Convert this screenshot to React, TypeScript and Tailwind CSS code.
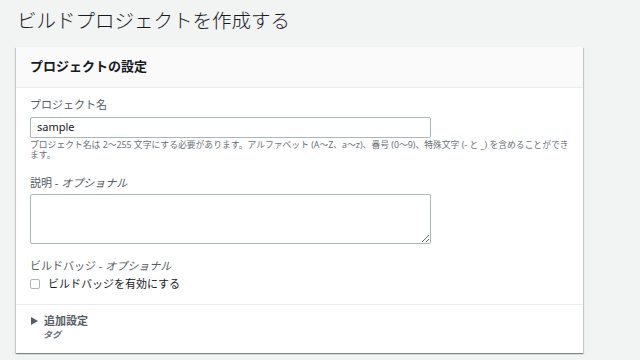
export default function App() {
  return (
    <div
      className="w-[640px] h-[360px] overflow-hidden bg-[#f2f3f3] text-[#16191f]"
      style={{ fontFamily: '"Noto Sans", "Noto Sans CJK JP", sans-serif' }}
    >
      <h1 className="pl-[17px] pt-[6px] h-[47px] text-[19.5px] leading-[30px] font-light text-[#16191f]">
        ビルドプロジェクトを作成する
      </h1>
      <div className="ml-4 w-[567px] bg-white shadow-[0_1px_1px_0_rgba(0,28,36,0.3),1px_1px_1px_0_rgba(0,28,36,0.15),-1px_1px_1px_0_rgba(0,28,36,0.15)]">
        <div className="h-[41px] px-[14px] flex items-center bg-[#fafafa] border-b border-[#eaeded]">
          <h2 className="text-[13px] font-bold text-[#16191f]">プロジェクトの設定</h2>
        </div>
        <div className="px-[14px] pt-[9px] pb-[12px]">
          <label className="block text-[11px] leading-[16px] text-[#545b64]">プロジェクト名</label>
          <div className="mt-[4px] w-[401px] h-[21px] border border-[#aab7b8] rounded-[2px] flex items-center px-[6px] text-[11px] text-[#16191f]">
            sample
          </div>
          <p className="mt-[2px] w-[540px] text-[8.8px] leading-[10px] text-[#687078]">
            プロジェクト名は 2〜255 文字にする必要があります。アルファベット (A〜Z、a〜z)、番号 (0〜9)、特殊文字 (- と _) を含めることができます。
          </p>
          <label className="block mt-[15px] text-[11px] leading-[16px] text-[#545b64]">
            説明 - <i>オプショナル</i>
          </label>
          <textarea
            className="block mt-[3px] w-[401px] h-[50px] border border-[#aab7b8] rounded-[2px] bg-white"
            readOnly
          />
          <label className="block mt-[14px] text-[11px] leading-[16px] text-[#545b64]">
            ビルドバッジ - <i>オプショナル</i>
          </label>
          <div className="mt-[2px] flex items-center gap-[8px]">
            <span className="w-[10px] h-[10px] border border-[#aab7b8] rounded-[2px] bg-white" />
            <span className="text-[11px] leading-[16px] text-[#16191f]">ビルドバッジを有効にする</span>
          </div>
        </div>
        <div className="border-t border-[#eaeded] px-[14px] pt-[8px] pb-[12px]">
          <div className="flex items-center gap-[6px]">
            <svg width="7" height="8" viewBox="0 0 7 8" className="ml-[1px]">
              <path d="M0 0 L7 4 L0 8 Z" fill="#545b64" />
            </svg>
            <span className="text-[11px] leading-[16px] font-bold text-[#545b64]">追加設定</span>
          </div>
          <div className="pl-[13px] text-[9px] leading-[12px] italic font-bold text-[#687078]">タグ</div>
        </div>
      </div>
    </div>
  )
}
